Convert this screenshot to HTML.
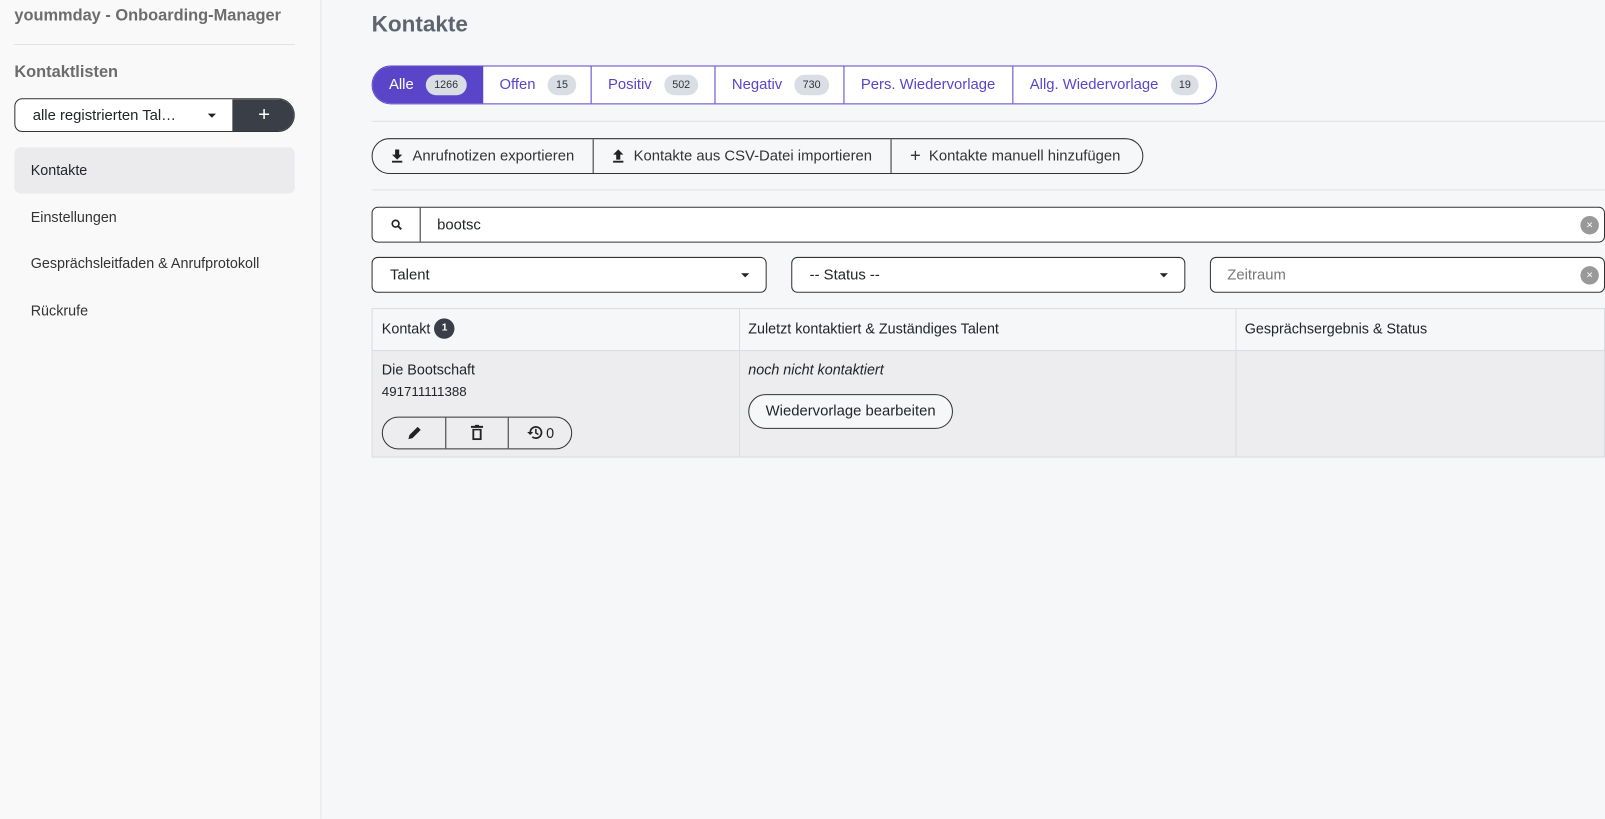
<!DOCTYPE html>
<html><head><meta charset="utf-8"><style>
*{box-sizing:border-box;margin:0;padding:0}
html,body{width:1605px;height:807px;overflow:hidden;background:#f6f7f9}
#w{position:absolute;left:0;top:0;width:1568px;height:790px;transform:scale(1.0236);transform-origin:0 0;font-family:"Liberation Sans",Arial,sans-serif;font-size:14px;color:#212529}
.a{position:absolute}
.side{left:0;top:0;width:314px;height:800px;background:#f9f9f9;border-right:1px solid #e5e5e5}
.tabs{left:363px;top:64px;height:38px;display:flex;border:1px solid #5a45c9;border-radius:19px;overflow:hidden;background:#fff}
.tab{display:flex;align-items:center;padding:0 16px;color:#5a45c9;font-size:14.5px;border-right:1px solid #5a45c9;height:100%}
.tab:last-child{border-right:0}
.tab.on{background:#5a45c9;color:#fff}
.b{display:inline-block;background:#d9dde4;color:#333;font-size:10.5px;border-radius:10px;padding:4px 8px;margin-left:12px}
.acts{left:363px;top:135px;height:35px;display:flex;border:1px solid #333;border-radius:18px;overflow:hidden;background:#f6f7f9}
.act{display:flex;align-items:center;padding:0 16px 0 18px;border-right:1px solid #333;font-size:14.5px;color:#333}
.act:last-child{border-right:0}
.hr{left:363px;width:1242px;height:1px;background:#dfe1e5}
.inp{background:#fff;border:1px solid #333;border-radius:6px;height:35px}
.x{position:absolute;right:5px;top:8px;width:18px;height:18px;border-radius:50%;background:#999;color:#fff;font-size:11px;text-align:center;line-height:18px}
.car{position:absolute;right:16px;top:15px;border-left:4px solid transparent;border-right:4px solid transparent;border-top:4px solid #222}
td{border:1px solid #d9dce1;vertical-align:top}
</style></head><body><div id="w">
<div class="a side">
<div class="a" style="left:14px;top:7px;font-weight:bold;font-size:16px;color:#6c6c6c">yoummday - Onboarding-Manager</div>
<div class="a" style="left:14px;top:43px;width:274px;height:1px;background:#e3e3e3"></div>
<div class="a" style="left:14px;top:62px;font-weight:bold;font-size:16px;color:#6c6c6c">Kontaktlisten</div>
<div class="a" style="left:14px;top:96px;width:274px;height:33px;border:1px solid #333;border-radius:8px 17px 17px 8px;overflow:hidden;background:#fff">
<div class="a" style="left:17px;top:8px;font-size:14.5px">alle registrierten Tal…</div>
<div class="a" style="left:188px;top:14px;border-left:4px solid transparent;border-right:4px solid transparent;border-top:4px solid #222"></div>
<div class="a" style="left:212px;top:0;width:62px;height:33px;background:#3a3e46;color:#fff;text-align:center;line-height:31px;font-size:20px">+</div>
</div>
<div class="a" style="left:14px;top:144px;width:274px;height:45px;background:#ebebee;border-radius:6px"></div>
<div class="a" style="left:30px;top:158px;font-size:14px">Kontakte</div>
<div class="a" style="left:30px;top:204px;font-size:14px;color:#333">Einstellungen</div>
<div class="a" style="left:30px;top:249px;font-size:14px;color:#333">Gesprächsleitfaden &amp; Anrufprotokoll</div>
<div class="a" style="left:30px;top:295px;font-size:14px;color:#333">Rückrufe</div>
</div>
<div class="a" style="left:363px;top:11px;font-size:22px;font-weight:bold;color:#5f6570">Kontakte</div>
<div class="a tabs">
<div class="tab on" style="width:108px">Alle<span class="b">1266</span></div>
<div class="tab" style="width:106px">Offen<span class="b">15</span></div>
<div class="tab" style="width:121px">Positiv<span class="b">502</span></div>
<div class="tab" style="width:126px">Negativ<span class="b">730</span></div>
<div class="tab" style="width:165px">Pers. Wiedervorlage</div>
<div class="tab" style="width:198px">Allg. Wiedervorlage<span class="b">19</span></div>
</div>
<div class="a hr" style="top:118px"></div>
<div class="a acts">
<div class="act" style="width:216px"><svg width="12" height="13" viewBox="0 0 12 13" style="margin-right:9px"><path d="M4 0h4v5h3l-5 5-5-5h3z M1 11h10v2H1z" fill="#222"/></svg>Anrufnotizen exportieren</div>
<div class="act" style="width:291px"><svg width="12" height="13" viewBox="0 0 12 13" style="margin-right:9px"><path d="M4 10h4V5h3L6 0 1 5h3z M1 11h10v2H1z" fill="#222"/></svg>Kontakte aus CSV-Datei importieren</div>
<div class="act" style="width:245px"><span style="font-size:18px;margin-right:8px">+</span>Kontakte manuell hinzufügen</div>
</div>
<div class="a hr" style="top:185px"></div>
<div class="a inp" style="left:363px;top:202px;width:1205px">
<div class="a" style="left:0;top:0;width:47px;height:33px;border-right:1px solid #333"><svg class="a" style="left:18px;top:11px" width="11" height="11" viewBox="0 0 11 11"><circle cx="4.5" cy="4.5" r="3.3" stroke="#222" stroke-width="1.6" fill="none"/><path d="M7 7l3 3" stroke="#222" stroke-width="1.8"/></svg></div>
<div class="a" style="left:63px;top:9px;font-size:14.5px">bootsc</div>
<div class="x">×</div>
</div>
<div class="a inp" style="left:363px;top:251px;width:386px"><div class="a" style="left:17px;top:9px;font-size:14.5px">Talent</div><div class="car"></div></div>
<div class="a inp" style="left:773px;top:251px;width:385px"><div class="a" style="left:17px;top:9px;font-size:14.5px">-- Status --</div><div class="car"></div></div>
<div class="a inp" style="left:1182px;top:251px;width:386px"><div class="a" style="left:16px;top:9px;font-size:14.5px;color:#777">Zeitraum</div><div class="x">×</div></div>
<table class="a" style="left:363px;top:301px;width:1205px;border-collapse:collapse">
<tr style="height:39px;background:#f6f7f9"><td style="width:359px;padding:11px 9px">Kontakt <span style="display:inline-block;width:20px;height:20px;border-radius:50%;background:#3a3e46;color:#fff;font-size:10px;text-align:center;line-height:20px;font-weight:bold;vertical-align:middle;margin-top:-3px">1</span></td><td style="width:485px;padding:11px 8px">Zuletzt kontaktiert &amp; Zuständiges Talent</td><td style="padding:11px 8px">Gesprächsergebnis &amp; Status</td></tr>
<tr style="height:104px;background:#ededef"><td style="position:relative;padding:10px 9px">Die Bootschaft<div style="font-size:13px;margin-top:6px">491711111388</div>
<div class="a" style="left:9px;top:64px;width:186px;height:32px;border:1px solid #333;border-radius:16px;display:flex;overflow:hidden">
<div style="width:62px;border-right:1px solid #333;display:flex;align-items:center;justify-content:center"><svg width="14" height="14" viewBox="0 0 14 14"><path d="M1 13l1-4 8-8 3 3-8 8z" fill="#222"/></svg></div>
<div style="width:61px;border-right:1px solid #333;display:flex;align-items:center;justify-content:center"><svg width="12" height="15" viewBox="0 0 12 15"><path d="M0 1h12v2H0z M4 0h4v1H4z M1.5 4h9v11h-9z M3.3 5.5v7.7h5.4V5.5z" fill="#222" fill-rule="evenodd"/></svg></div>
<div style="flex:1;display:flex;align-items:center;justify-content:center"><svg width="16" height="15" viewBox="0 0 16 15"><path d="M4 7.5a5.5 5.5 0 1 1 2 4.3" stroke="#222" stroke-width="1.7" fill="none"/><path d="M1 7l3 3 3-3z" fill="#222"/><path d="M9.5 4v4l2.5 1.5" stroke="#222" stroke-width="1.5" fill="none"/></svg>&nbsp;0</div>
</div></td>
<td style="padding:10px 8px"><div><i>noch nicht kontaktiert</i></div><div style="margin-top:16px;display:inline-block;border:1px solid #333;border-radius:17px;padding:8px 16px;font-size:14.5px;background:#f6f7f9">Wiedervorlage bearbeiten</div></td><td></td></tr>
</table>
</div></body></html>
